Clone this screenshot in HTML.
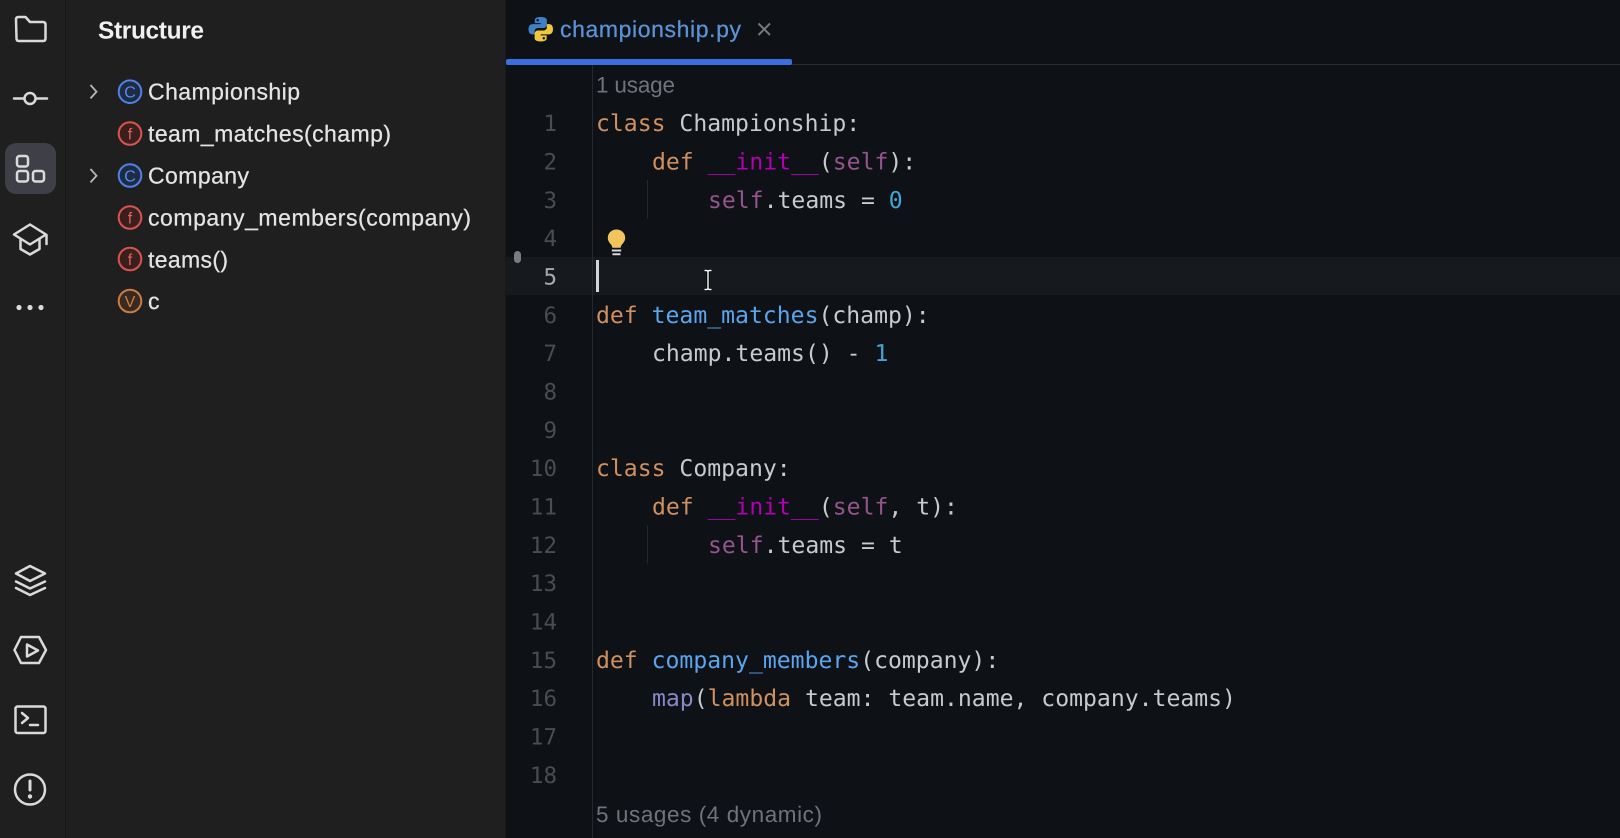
<!DOCTYPE html>
<html lang="en">
<head>
<meta charset="utf-8">
<title>championship.py</title>
<style>
html,body{margin:0;padding:0;width:1620px;height:838px;overflow:hidden;background:#0e1116}
svg{display:block;filter:blur(.35px)}
text{text-rendering:geometricPrecision;white-space:pre}
.s{font-family:"Liberation Sans",sans-serif;font-size:23px;fill:#e4e4e4;stroke:#e4e4e4;stroke-width:.25px}
.m{font-family:"DejaVu Sans Mono","Liberation Mono",monospace;font-size:23.1px;fill:#c8cacd}
.n{font-family:"DejaVu Sans Mono","Liberation Mono",monospace;font-size:22.5px;fill:#494c51;text-anchor:end}
.k{fill:#d0905f}.d{fill:#b200b2}.e{fill:#94558d}.u{fill:#3fa6d8}.f{fill:#5aa5ee}.b{fill:#8888c6}
.h{font-family:"Liberation Sans",sans-serif;font-size:22.5px;fill:#70737a}
.i{font-family:"Liberation Sans",sans-serif;font-size:16px;text-anchor:middle}
.r{fill:none;stroke:#dadada;stroke-width:2.500;stroke-linejoin:round;stroke-linecap:round}
</style>
</head>
<body>
<svg width="1620" height="838" viewBox="0 0 1620 838" xmlns="http://www.w3.org/2000/svg">
<rect width="1620" height="838" fill="#0e1116"/>
<rect width="505" height="838" fill="#1e1f1e"/>
<rect x="65" width="1" height="838" fill="#14171b"/>
<rect x="505" width="1" height="838" fill="#171a1d"/>

<!-- rail icons -->
<path class="r" d="M16 19.500q0-2.500 2.500-2.500h7l4.500 5h13q2.500 0 2.500 2.500v14q0 2.500-2.500 2.500h-24q-2.500 0-2.500-2.500z"/>
<circle class="r" cx="30" cy="98.500" r="5.500"/>
<path class="r" d="M14 98.500h10M36 98.500h11"/>
<rect x="5" y="143" width="51" height="51" rx="11" fill="#3e3f47"/>
<rect class="r" x="17" y="156" width="11" height="10.500" rx="2.500"/>
<rect class="r" x="17" y="171" width="11" height="10.500" rx="2.500"/>
<rect class="r" x="33" y="171" width="11" height="10.500" rx="2.500"/>
<path class="r" d="M30 224.500L14 234.500L30 244.500L46 234.500Z"/>
<path class="r" d="M20.500 239v10l9.500 5.500l9.500-5.500v-10M46.500 235v9"/>
<g fill="#dadada"><circle cx="19" cy="307.500" r="2.600"/><circle cx="30" cy="307.500" r="2.600"/><circle cx="41" cy="307.500" r="2.600"/></g>
<path class="r" d="M30 566L45 573.500L30 581L16 573.500Z"/>
<path class="r" d="M16 581.500L30 588.500L45 581.500M16 588L30 595L45 588"/>
<path class="r" d="M21 637H39L46 650L39 663H21L14.500 650Z"/>
<path class="r" d="M27 644.500L38 650.500L27 656.500Z"/>
<rect class="r" x="15.500" y="706.500" width="30" height="26.500" rx="2"/>
<path class="r" d="M22 713l6 5-6 5M30 725h8"/>
<circle class="r" cx="30" cy="789.500" r="15"/>
<path class="r" d="M30 781v9" style="stroke-width:3"/>
<circle cx="30" cy="796.500" r="2.200" fill="#dadada"/>

<!-- structure panel -->
<text class="s" x="98" y="38.500" textLength="106" lengthAdjust="spacing" style="font-size:24.5px;font-weight:700;fill:#f0f0f0;stroke:none">Structure</text>

<path d="M90.500 85l6 6.700-6 6.700M90.500 169l6 6.700-6 6.700" fill="none" stroke="#b8b8b8" stroke-width="1.800"/>

<g stroke-width="2">
<circle cx="130" cy="91.700" r="11.300" fill="#1e2b45" stroke="#4f82e6"/>
<circle cx="130" cy="133.500" r="11.300" fill="#3a1f1f" stroke="#d9534f"/>
<circle cx="130" cy="175.500" r="11.300" fill="#1e2b45" stroke="#4f82e6"/>
<circle cx="130" cy="217.500" r="11.300" fill="#3a1f1f" stroke="#d9534f"/>
<circle cx="130" cy="259" r="11.300" fill="#3a1f1f" stroke="#d9534f"/>
<circle cx="130" cy="301" r="11.300" fill="#382a20" stroke="#c77d45"/>
</g>
<text class="i" x="130" y="97.500" fill="#5a8ce8">C</text>
<text class="i" x="130" y="139.300" fill="#e0605a">f</text>
<text class="i" x="130" y="181.300" fill="#5a8ce8">C</text>
<text class="i" x="130" y="223.300" fill="#e0605a">f</text>
<text class="i" x="130" y="264.800" fill="#e0605a">f</text>
<text class="i" x="130" y="306.800" fill="#c77d45">V</text>

<text class="s" x="148" y="99.500" textLength="152" lengthAdjust="spacing">Championship</text>
<text class="s" x="148" y="141.500" textLength="243" lengthAdjust="spacing">team_matches(champ)</text>
<text class="s" x="148" y="183.300" textLength="101" lengthAdjust="spacing">Company</text>
<text class="s" x="148" y="225.300" textLength="323" lengthAdjust="spacing">company_members(company)</text>
<text class="s" x="148" y="267.300" textLength="80" lengthAdjust="spacing">teams()</text>
<text class="s" x="148" y="309">c</text>

<!-- tab bar -->
<g transform="translate(528.500 17) scale(1.020)">
<path fill="#3f7fc4" d="M12 0C8 0 6.200 1 6.200 3V6H12V7H4C1.500 7 0 9 0 12C0 15 1.400 17 3.500 17H6V14C6 12 7.500 10.800 9.500 10.800H14.500C16.500 10.800 18 9.500 18 7.500V3C18 1 15.500 0 12 0Z"/>
<path fill="#f0c63e" d="M12 24C16 24 17.800 23 17.800 21V18H12V17H20C22.500 17 24 15 24 12C24 9 22.600 7 20.500 7H18V10C18 12 16.500 13.200 14.500 13.200H9.500C7.500 13.200 6 14.500 6 16.500V21C6 23 8.500 24 12 24Z"/>
<circle cx="9" cy="3.200" r="1.200" fill="#0e1116"/><circle cx="15" cy="20.800" r="1.200" fill="#0e1116"/>
</g>
<text class="s" x="560" y="37" textLength="181" lengthAdjust="spacing" style="fill:#5b94d6;stroke:#5b94d6">championship.py</text>
<path d="M758.500 23.500l11.500 11.500M770 23.500l-11.500 11.500" stroke="#75787c" stroke-width="2" fill="none"/>
<rect x="506" y="64" width="1114" height="1" fill="#2b2d30"/>
<rect x="506" y="59" width="286" height="6" rx="2" fill="#3a6fe0"/>

<!-- editor -->
<rect x="506" y="257" width="1114" height="38" fill="#16191e"/>
<rect x="592" y="65" width="1" height="773" fill="#25282c"/>
<rect x="647" y="180" width="1" height="38" fill="#24272b"/>
<rect x="647" y="525.500" width="1" height="38" fill="#24272b"/>
<rect x="514" y="251" width="7" height="12" rx="3.500" fill="#7a7d80"/>
<rect x="596" y="260" width="3" height="32" fill="#d4d4d4"/>

<text class="h" x="596" y="92.300" textLength="79" lengthAdjust="spacing">1 usage</text>
<text class="h" x="596" y="822" textLength="226" lengthAdjust="spacing">5 usages (4 dynamic)</text>

<g>
<text class="n" x="557" y="131.200">1</text>
<text class="n" x="557" y="169.500">2</text>
<text class="n" x="557" y="207.900">3</text>
<text class="n" x="557" y="246.200">4</text>
<text class="n" x="557" y="284.500" style="fill:#a8aaae">5</text>
<text class="n" x="557" y="322.900">6</text>
<text class="n" x="557" y="361.200">7</text>
<text class="n" x="557" y="399.500">8</text>
<text class="n" x="557" y="437.800">9</text>
<text class="n" x="557" y="476.200">10</text>
<text class="n" x="557" y="514.500">11</text>
<text class="n" x="557" y="552.800">12</text>
<text class="n" x="557" y="591.200">13</text>
<text class="n" x="557" y="629.500">14</text>
<text class="n" x="557" y="667.800">15</text>
<text class="n" x="557" y="706.200">16</text>
<text class="n" x="557" y="744.500">17</text>
<text class="n" x="557" y="782.800">18</text>
</g>

<text class="m" x="596" y="131.200"><tspan class="k">class</tspan> Championship:</text>
<text class="m" x="652" y="169.500"><tspan class="k">def</tspan> <tspan class="d">__init__</tspan>(<tspan class="e">self</tspan>):</text>
<text class="m" x="708" y="207.900"><tspan class="e">self</tspan>.teams = <tspan class="u">0</tspan></text>
<text class="m" x="596" y="322.900"><tspan class="k">def</tspan> <tspan class="f">team_matches</tspan>(champ):</text>
<text class="m" x="652" y="361.200">champ.teams() - <tspan class="u">1</tspan></text>
<text class="m" x="596" y="476.200"><tspan class="k">class</tspan> Company:</text>
<text class="m" x="652" y="514.500"><tspan class="k">def</tspan> <tspan class="d">__init__</tspan>(<tspan class="e">self</tspan>, t):</text>
<text class="m" x="708" y="552.800"><tspan class="e">self</tspan>.teams = t</text>
<text class="m" x="596" y="667.800"><tspan class="k">def</tspan> <tspan class="f">company_members</tspan>(company):</text>
<text class="m" x="652" y="706.200"><tspan class="b">map</tspan>(<tspan class="k">lambda</tspan> team: team.name, company.teams)</text>

<!-- bulb -->
<path fill="#f2c55c" d="M616.500 229.500c-4.900 0-8.700 3.700-8.700 8.300 0 3 1.500 4.700 3 6.500 1 1.200 1.500 2.200 1.500 3.500h8.400c0-1.300.5-2.300 1.500-3.500 1.500-1.800 3-3.500 3-6.500 0-4.600-3.800-8.300-8.700-8.300z"/>
<path d="M611.800 250.500h9.400M612.500 254.300h8" stroke="#d8d8d8" stroke-width="2" fill="none"/>

<!-- I-beam cursor -->
<path d="M704.500 270.500h2.500l1 1 1-1h2.500M708 271.500v17M704.500 289.500h2.500l1-1 1 1h2.500" stroke="#000" stroke-width="3" fill="none"/>
<path d="M704.500 270.500h2.500l1 1 1-1h2.500M708 271.500v17M704.500 289.500h2.500l1-1 1 1h2.500" stroke="#fff" stroke-width="1.400" fill="none"/>
</svg>
</body>
</html>
